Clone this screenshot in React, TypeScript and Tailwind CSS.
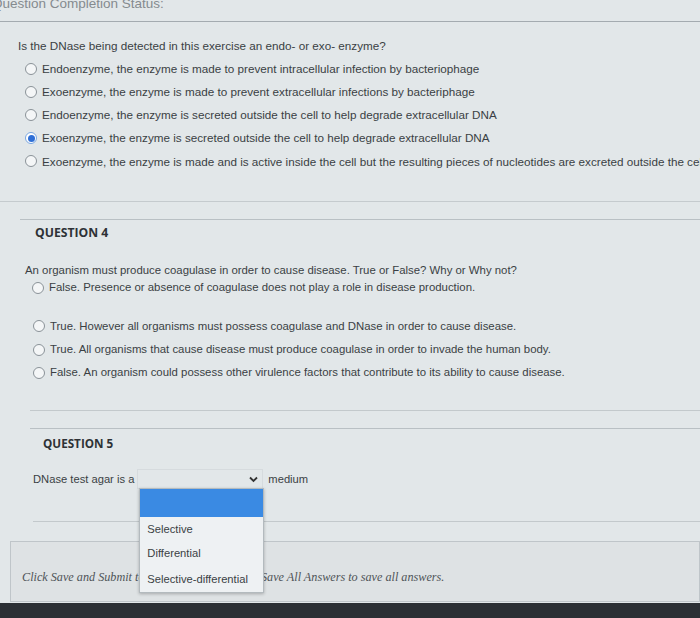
import React from 'react';

const Radio = ({ checked = false }: { checked?: boolean }) =>
  checked ? (
    <span className="w-[12px] h-[12px] rounded-full border border-[#7aa7e0] bg-white flex items-center justify-center shrink-0">
      <span className="w-[7px] h-[7px] rounded-full bg-[#2f6fd6]" />
    </span>
  ) : (
    <span className="w-[12px] h-[12px] rounded-full border-[1.5px] border-[#8a9298] bg-[#f4f6f7] shrink-0" />
  );

const Option = ({ text, checked, className }: { text: string; checked?: boolean; className: string }) => (
  <div className={`flex items-center gap-[5px] whitespace-nowrap ${className}`}>
    <Radio checked={checked} />
    <span>{text}</span>
  </div>
);

export default function App() {
  const q3 = [
    'Endoenzyme, the enzyme is made to prevent intracellular infection by bacteriophage',
    'Exoenzyme, the enzyme is made to prevent extracellular infections by bacteriphage',
    'Endoenzyme, the enzyme is secreted outside the cell to help degrade extracellular DNA',
    'Exoenzyme, the enzyme is secreted outside the cell to help degrade extracellular DNA',
    'Exoenzyme, the enzyme is made and is active inside the cell but the resulting pieces of nucleotides are excreted outside the cell',
  ];

  return (
    <div className="w-[700px] h-[618px] overflow-hidden relative bg-[#e2e7e9] text-[#3a3f44] font-['Liberation_Sans',Arial,sans-serif]">
      {/* completion status strip */}
      <div className="h-[22px] border-b border-[#a4abb0] overflow-hidden">
        <p className="-mt-[3px] -ml-[8px] text-[13.5px] leading-[14px] text-[#858b8f]">Question Completion Status:</p>
      </div>

      {/* question 3 */}
      <div className="pt-[12px] pl-[18px] text-[11.7px]">
        <div className="h-[23px] flex items-center whitespace-nowrap">
          Is the DNase being detected in this exercise an endo- or exo- enzyme?
        </div>
        {q3.map((t, i) => (
          <Option key={i} text={t} checked={i === 3} className="h-[23.2px] pl-[7px]" />
        ))}
      </div>

      <div className="mt-[28px] border-b border-[#c5cbce]" />
      <div className="mt-[17px] ml-[20px] border-b border-[#b9c0c4]" />

      {/* question 4 */}
      <div className="pl-[35px] h-[26px] flex items-center font-['Open_Sans',sans-serif] font-bold text-[12.2px] text-[#2e3236]">
        QUESTION 4
      </div>
      <div className="pl-[25px] pt-[17px] text-[11.4px]">
        <div className="h-[16px] flex items-center whitespace-nowrap">
          An organism must produce coagulase in order to cause disease. True or False? Why or Why not?
        </div>
        <Option text="False. Presence or absence of coagulase does not play a role in disease production." className="h-[18px] pl-[7px]" />
        <div className="h-[18px]" />
        <Option text="True. However all organisms must possess coagulase and DNase in order to cause disease." className="h-[23px] pl-[8px]" />
        <Option text="True. All organisms that cause disease must produce coagulase in order to invade the human body." className="h-[23.5px] pl-[8px]" />
        <Option text="False. An organism could possess other virulence factors that contribute to its ability to cause disease." className="h-[23px] pl-[8px]" />
      </div>

      <div className="mt-[26px] ml-[30px] border-b border-[#c3c9cc]" />
      <div className="mt-[17px] ml-[30px] border-b border-[#b9c0c4]" />

      {/* question 5 */}
      <div className="pl-[43px] h-[29px] flex items-center font-['Open_Sans',sans-serif] font-bold text-[11.7px] text-[#2e3236]">
        QUESTION 5
      </div>
      <div className="mt-[11px] pl-[33px] flex items-center h-[20px] whitespace-nowrap text-[11.2px]">
        <span>DNase test agar is a</span>
        <div className="ml-[3px] w-[126px] h-[20px] border border-[#d6dbde] flex items-center justify-end pr-[4px] relative">
          <svg width="9" height="7" viewBox="0 0 9 7" className="text-[#333]">
            <path d="M1 1.5 L4.5 5 L8 1.5" fill="none" stroke="currentColor" strokeWidth="1.8" />
          </svg>

          {/* open dropdown */}
          <div className="absolute left-[1px] top-full w-[125px] bg-[#eef1f3] border border-[#b3babe] shadow-[0_1px_3px_rgba(0,0,0,0.25)] z-10 text-[11.2px] text-[#3a3f44]">
            <div className="h-[28px] bg-[#3a8ae3]" />
            <div className="h-[23px] flex items-center pl-[7px]">Selective</div>
            <div className="h-[26px] flex items-center pl-[7px]">Differential</div>
            <div className="h-[26px] flex items-center pl-[7px]">Selective-differential</div>
          </div>
        </div>
        <span className="ml-[5px]">medium</span>
      </div>

      <div className="mt-[32px] ml-[33px] border-b border-[#c3c9cc]" />

      {/* footer */}
      <div className="mt-[19px] ml-[10px] h-[61px] border border-[#bfc5c9] bg-[#dee2e4] flex items-center pl-[11px] pt-[10px] whitespace-nowrap font-['Liberation_Serif',serif] italic text-[12.2px] text-[#4f5458]">
        Click Save and Submit to save and submit. Click Save All Answers to save all answers.
      </div>

      <div className="absolute left-0 right-0 bottom-0 h-[15px] bg-[#2b2f34]" />
    </div>
  );
}
